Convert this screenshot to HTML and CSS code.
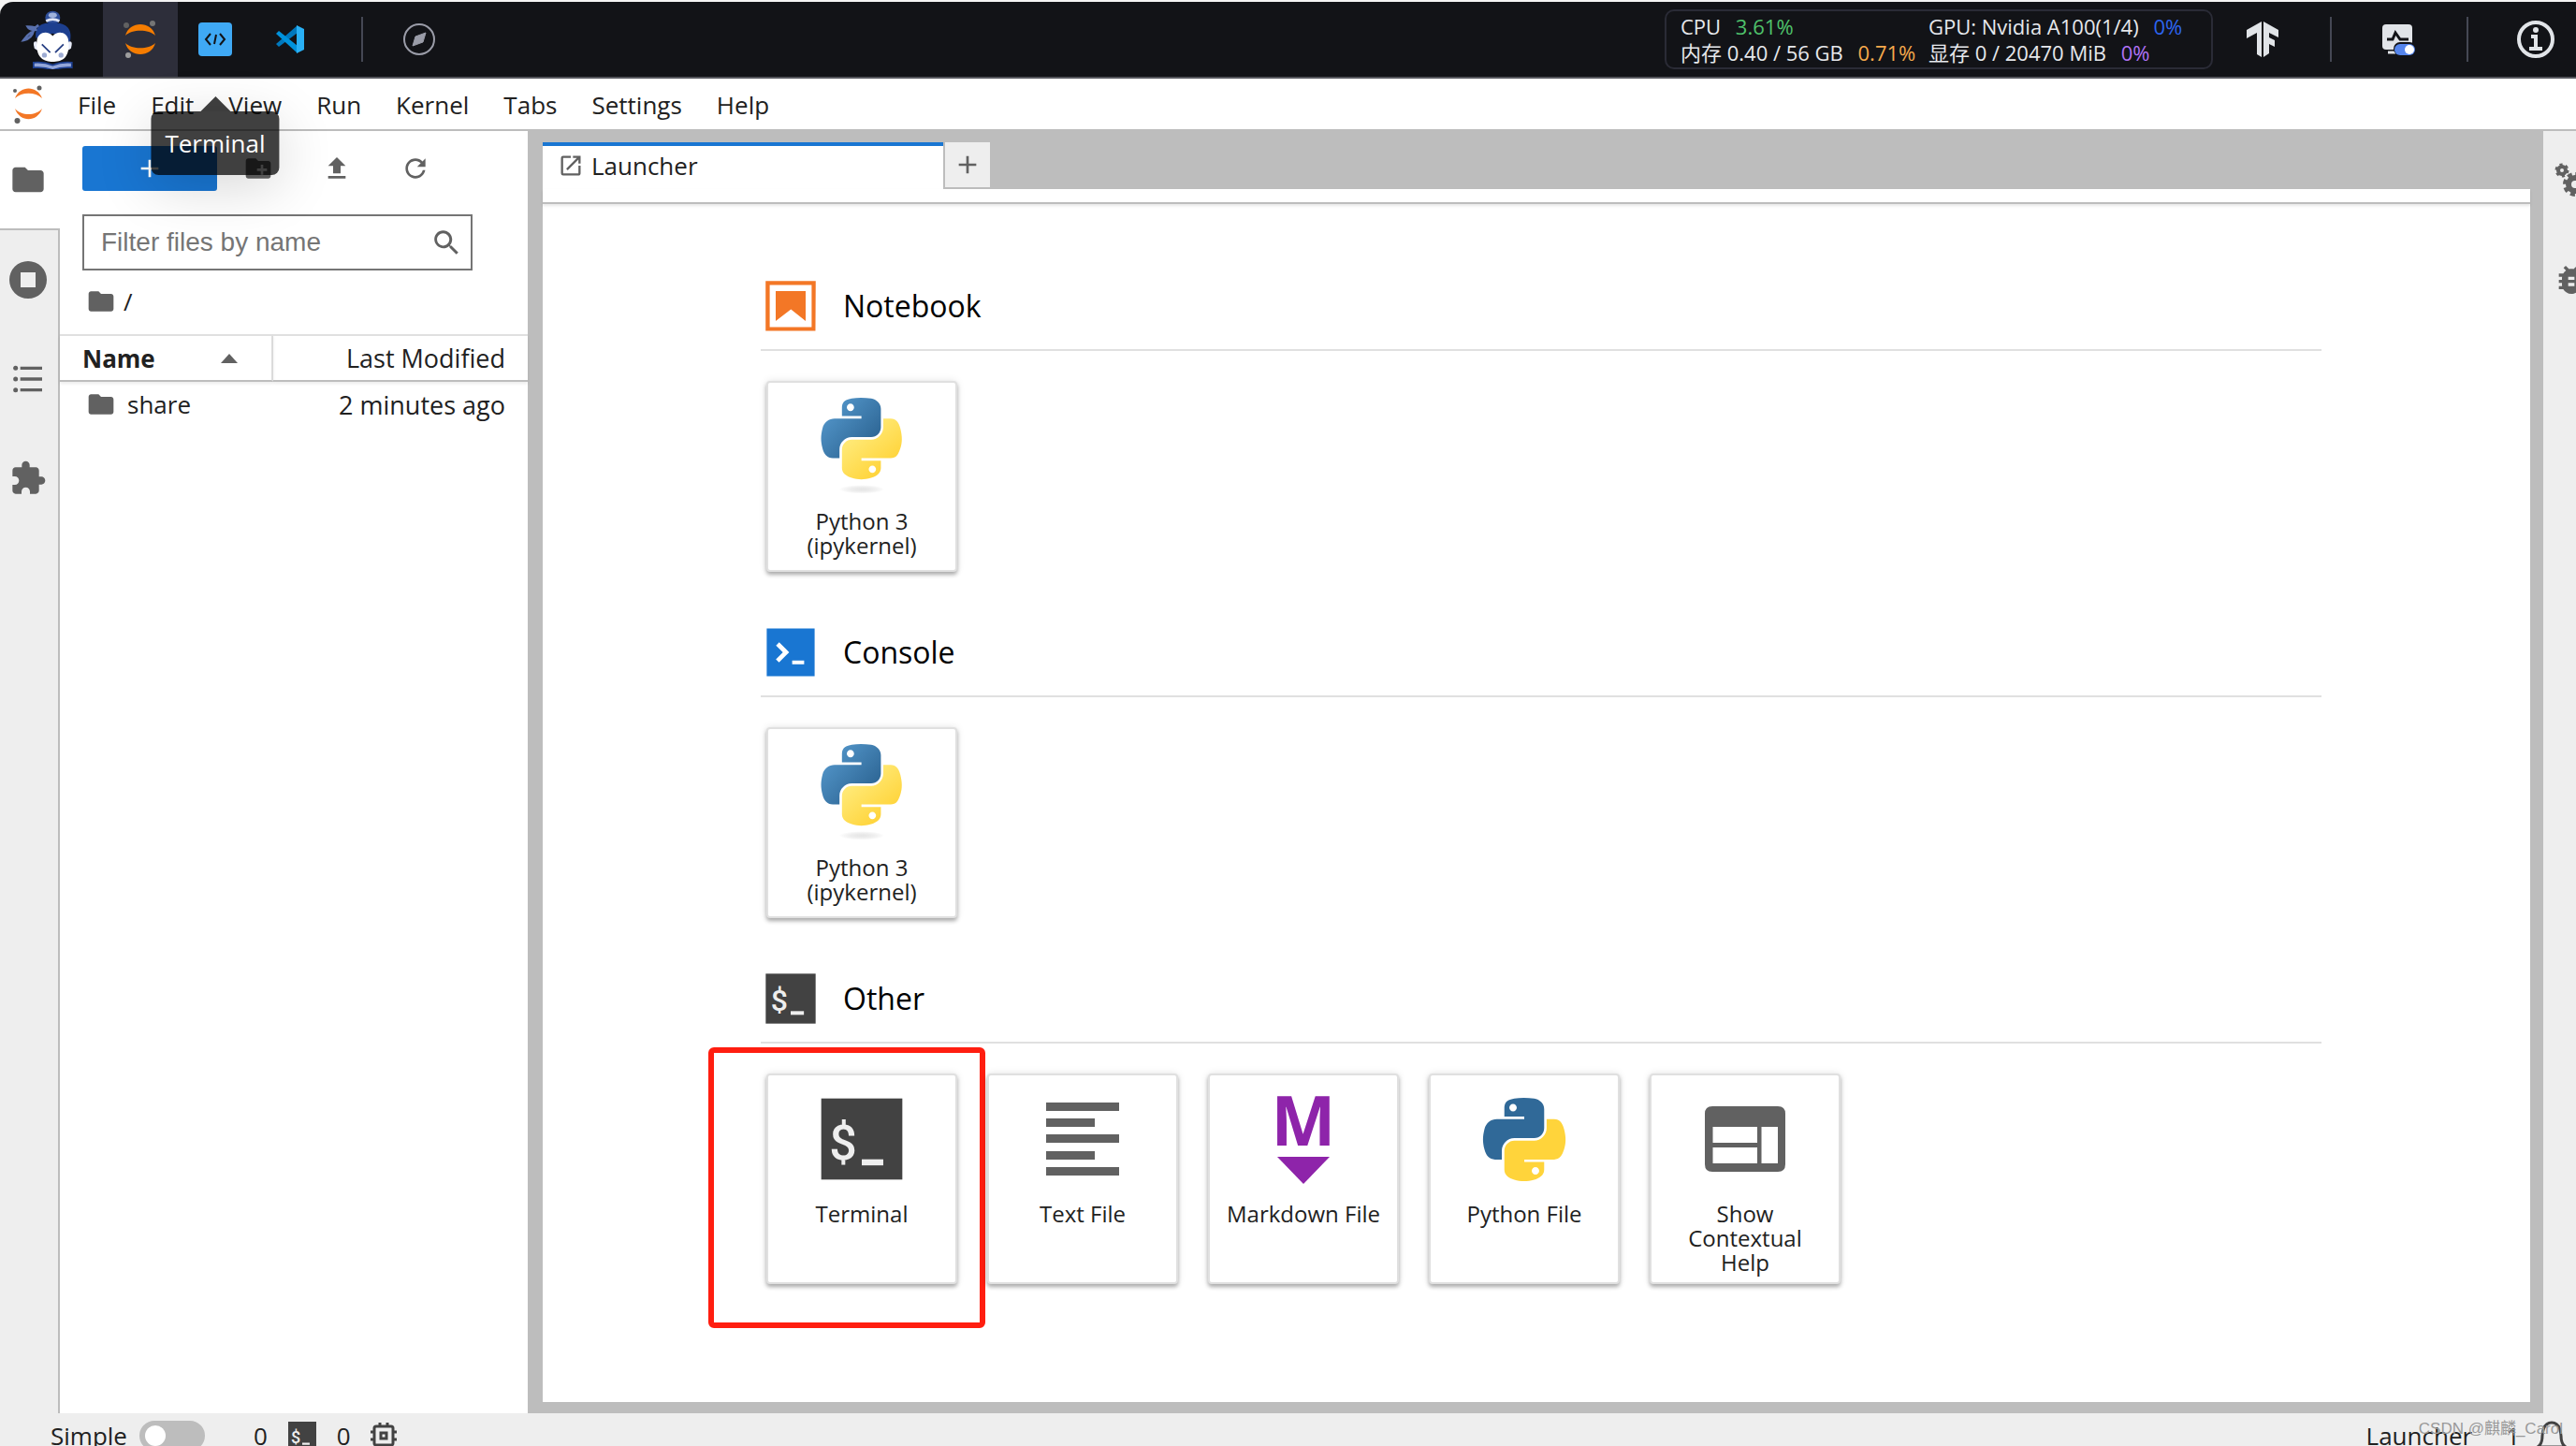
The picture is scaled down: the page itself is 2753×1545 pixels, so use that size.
FILE: index.html
```html
<!DOCTYPE html>
<html lang="en">
<head>
    <meta charset="UTF-8">
    <meta name="viewport" content="width=device-width, initial-scale=1.0">
    <title>JupyterLab</title>
    <link rel="stylesheet" href="styles.css">
</head>
<body>
    <!-- Shared icons -->
    <svg class="sprite" aria-hidden="true">
        <defs>
            <linearGradient id="pyBlue" x1="0" y1="0" x2="0.8" y2="0.75">
                <stop offset="0" stop-color="#5a9fd4"/>
                <stop offset="1" stop-color="#306998"/>
            </linearGradient>
            <linearGradient id="pyYellow" x1="0.25" y1="0.3" x2="0.7" y2="0.85">
                <stop offset="0" stop-color="#ffe873"/>
                <stop offset="1" stop-color="#ffd43b"/>
            </linearGradient>
            <radialGradient id="pyShadow">
                <stop offset="0" stop-color="#b8b8b8" stop-opacity="0.35"/>
                <stop offset="1" stop-color="#7f7f7f" stop-opacity="0"/>
            </radialGradient>
            <path id="pyTop" d="M54.9 0C50.3 0 46 .4 42.1 1.1 30.8 3.1 28.7 7.3 28.7 15v10.2h26.8v3.4H18.6c-7.8 0-14.6 4.7-16.7 13.6-2.5 10.2-2.6 16.6 0 27.3 1.9 7.9 6.4 13.6 14.2 13.6h9.2V70.9c0-8.9 7.7-16.7 16.8-16.7h26.8c7.4 0 13.4-6.1 13.4-13.6V15.100c0-7.300-6.100-12.700-13.400-14C64.300.300 59.500 0 54.900 0zM40.400 8.200c2.800 0 5 2.300 5 5.100s-2.200 5.100-5 5.100-5-2.300-5-5.100 2.200-5.100 5-5.100z"/>
            <path id="pyBottom" d="M85.600 28.700v11.900c0 9.200-7.800 17-16.700 17H42.100c-7.300 0-13.400 6.300-13.400 13.600v25.500c0 7.300 6.300 11.500 13.400 13.600 8.500 2.500 16.600 2.900 26.800 0 6.700-2 13.400-5.900 13.400-13.600V86.500H55.500v-3.400h40.200c7.800 0 10.700-5.400 13.400-13.600 2.800-8.400 2.700-16.500 0-27.200-1.900-7.800-5.600-13.600-13.400-13.600zM70.600 93.300c2.800 0 5 2.300 5 5.100s-2.200 5.100-5 5.100-5-2.300-5-5.100 2.200-5.100 5-5.100z"/>
        </defs>
        <symbol id="folder" viewBox="0 0 24 24">
            <path d="M10 4H4c-1.100 0-1.990.9-1.990 2L2 18c0 1.100.9 2 2 2h16c1.100 0 2-.9 2-2V8c0-1.100-.9-2-2-2h-8l-2-2z"/>
        </symbol>
        <symbol id="python" viewBox="-11 0 134 134">
            <use href="#pyTop" fill="url(#pyBlue)"/>
            <use href="#pyBottom" fill="url(#pyYellow)"/>
            <ellipse cx="56" cy="126" rx="31" ry="6" fill="url(#pyShadow)"/>
        </symbol>
        <symbol id="terminal" viewBox="0 0 24 24">
            <rect x="2" y="2" width="20" height="20" fill="#424242"/>
            <text class="glyph" x="4" y="17" font-size="12" fill="#eee">$</text>
            <rect x="12" y="17" width="5.300" height="1.500" fill="#eee"/>
        </symbol>
    </svg>

    <header class="topbar">
        <svg class="brand" viewBox="0 0 66 72" aria-label="Logo">
            <ellipse cx="39" cy="10" rx="9" ry="8" fill="#30509b"/>
            <ellipse cx="39" cy="7" rx="5" ry="3" fill="#9fb2dc"/>
            <path d="M31 14q8-4 16 0" fill="none" stroke="#dfe5f5" stroke-width="3"/>
            <path d="M19 35C16 17 30 16 39 16s25 2 21 22q-4 5-8-5-13-8-27 0z" fill="#1d3f8f"/>
            <path d="M20 24q-8 2-11-3 5 0 9 1l4-3M16 25q-2 10-12 12 4-6 10-10" fill="none" stroke="#5970ad" stroke-width="3"/>
            <path d="M20 39q-6-2-3 8l5 3zM58 39q6-2 3 8l-5 3z" fill="#e8ecfa"/>
            <path d="M20 38c1-11 13-13 19-6 6-7 18-5 19 6 2 22-9 25-19 25s-21-4-19-25z" fill="#fff"/>
            <path d="M26 42l10 10M52 42L42 52" stroke="#273f83" stroke-width="2"/>
            <circle cx="29" cy="55" r="3" fill="#9dabd2"/>
            <circle cx="49" cy="55" r="3" fill="#9dabd2"/>
            <path d="M16 64q13-1 23 3 10-4 23-3v6q-13-1-23 3-10-4-23-3z" fill="#93a6d9" stroke="#1d3f8f" stroke-width="2"/>
        </svg>
        <button class="app active" aria-label="Jupyter">
            <svg width="40" height="40" viewBox="0 0 40 40">
                <path d="M4 16C8 0 32 0 36 16 29 9 11 9 4 16zM4 24c4 16 28 16 32 0-7 7-25 7-32 0z" fill="#f57c00"/>
                <circle cx="5" cy="5" r="3" fill="#616161"/><circle cx="33" cy="3" r="3" fill="#757575"/><circle cx="7" cy="37" r="3" fill="#9e9e9e"/>
            </svg>
        </button>
        <button class="app" aria-label="Terminal">
            <svg width="36" height="36" viewBox="0 0 36 36">
                <rect width="36" height="36" rx="4" fill="#3fa9f5"/>
                <path d="M13 12l-5 6 5 6M23 12l5 6-5 6M19 13l-2 10" fill="none" stroke="#121317" stroke-width="2"/>
            </svg>
            <span class="tooltip">Terminal</span>
        </button>
        <button class="app" aria-label="VS Code">
            <svg width="32" height="32" viewBox="0 0 32 32">
                <path d="M1 21l3 3L24 9V1z" fill="#0078bd"/>
                <path d="M1 10l3-3 20 16v8z" fill="#0092dc"/>
                <path d="M23 1l8 4v22l-8 4z" fill="#29b0f5"/>
            </svg>
        </button>
        <span class="divider apps-end"></span>
        <button class="app" aria-label="Explore">
            <svg width="36" height="36" viewBox="0 0 36 36">
                <circle cx="18" cy="18" r="16" fill="none" stroke="#9a9ca8" stroke-width="2"/>
                <path d="M25 11l-3 10-11 4 3-10z" fill="#9a9ca8" stroke="#9a9ca8" stroke-linejoin="round"/>
            </svg>
        </button>

        <div class="stats">
            <p>CPU <span class="green">3.61%</span></p>
            <p>GPU: Nvidia A100(1/4) <span class="blue">0%</span></p>
            <p>内存 0.40 / 56 GB <span class="orange">0.71%</span></p>
            <p>显存 0 / 20470 MiB <span class="purple">0%</span></p>
        </div>
        <button class="app" aria-label="TensorBoard">
            <svg width="34" height="38" viewBox="0 0 34 38">
                <path fill="#e1e4e8" d="M16 0v38l-5-3V12L0 18V9zM18 0l16 9v8l-10-5v5l6 3v7l-6-3v10l-6 4z"/>
            </svg>
        </button>
        <span class="divider"></span>
        <button class="app" aria-label="Monitor">
            <svg width="36" height="34" viewBox="0 0 36 34">
                <rect width="32" height="27" y="1" rx="4" fill="#e1e4e8"/>
                <path d="M5 17h6l3-7 5 7h9" fill="none" stroke="#121317" stroke-width="3"/>
                <path d="M6 31h8" stroke="#e1e4e8" stroke-width="3"/>
                <rect x="12" y="20" width="24" height="14" rx="7" fill="#121317"/>
                <rect x="13" y="22" width="22" height="12" rx="6" fill="#5585ec"/>
                <circle cx="29" cy="28" r="5" fill="#fff"/>
            </svg>
        </button>
        <span class="divider"></span>
        <button class="app" aria-label="Info">
            <svg width="40" height="40" viewBox="0 0 40 40" fill="none" stroke="#e1e4e8">
                <circle cx="20" cy="20" r="18" stroke-width="4"/>
                <path d="M15 17h5v13M13 30h14" stroke-width="4"/>
                <circle cx="20" cy="10" r="3" fill="#e1e4e8" stroke="none"/>
            </svg>
        </button>
    </header>

    <nav class="menubar">
        <svg width="40" height="44" viewBox="0 0 40 44">
            <path d="M6 16C11 2 30 2 35 16 28 9 13 9 6 16zM6 27c5 15 24 15 29 0-7 8-22 8-29 0z" fill="#f37726"/>
            <circle cx="6" cy="8" r="2" fill="#616161"/><circle cx="32" cy="5" r="2.500" fill="#616161"/><circle cx="8.500" cy="40" r="3" fill="#616161"/>
        </svg>
        <div class="menu">
            <button>File</button>
            <button>Edit</button>
            <button>View</button>
            <button>Run</button>
            <button>Kernel</button>
            <button>Tabs</button>
            <button>Settings</button>
            <button>Help</button>
        </div>
    </nav>

    <div class="workspace">
        <aside class="sidebar">
            <button class="current" aria-label="File Browser"><svg class="icon-lg"><use href="#folder"/></svg></button>
            <button aria-label="Running"><svg class="icon-lg" viewBox="2 2 20 20"><path d="M12 2a10 10 0 100 20 10 10 0 000-20zm4 14H8V8h8z"/></svg></button>
            <button aria-label="Table of Contents"><svg class="icon-lg" viewBox="0 0 24 24"><path d="M7 4h14v2H7zM7 11h14v2H7zM7 18h14v2H7z"/><circle cx="4" cy="5" r="1.500"/><circle cx="4" cy="12" r="1.500"/><circle cx="4" cy="19" r="1.500"/></svg></button>
            <button aria-label="Extensions"><svg class="icon-lg" viewBox="0 0 24 24"><path d="M20.500 11H19V7c0-1.100-.9-2-2-2h-4V3.500C13 2.120 11.880 1 10.500 1S8 2.120 8 3.500V5H4c-1.100 0-1.990.9-1.990 2v3.800H3.500c1.490 0 2.700 1.210 2.700 2.700s-1.210 2.700-2.700 2.700H2V20c0 1.100.9 2 2 2h3.800v-1.500c0-1.490 1.210-2.700 2.700-2.700 1.490 0 2.700 1.210 2.700 2.700V22H17c1.100 0 2-.9 2-2v-4h1.500c1.380 0 2.500-1.120 2.500-2.500S21.880 11 20.500 11z"/></svg></button>
        </aside>

        <section class="files">
            <div class="file-toolbar">
                <button class="new" aria-label="New Launcher"><svg class="icon" viewBox="0 0 24 24"><path d="M19 13h-6v6h-2v-6H5v-2h6V5h2v6h6z"/></svg></button>
                <button aria-label="New Folder"><svg class="icon" viewBox="0 0 24 24"><path d="M20 6h-8l-2-2H4c-1.110 0-1.990.89-1.990 2L2 18c0 1.110.89 2 2 2h16c1.110 0 2-.89 2-2V8c0-1.110-.89-2-2-2zm-1 8h-3v3h-2v-3h-3v-2h3V9h2v3h3v2z"/></svg></button>
                <button aria-label="Upload"><svg class="icon" viewBox="0 0 24 24"><path d="M5 20h14v-2H5v2zm0-10h4v6h6v-6h4l-7-7-7 7z"/></svg></button>
                <button aria-label="Refresh"><svg class="icon" viewBox="0 0 18 18"><path d="M9 13.500c-2.490 0-4.500-2.010-4.500-4.500S6.510 4.500 9 4.500c1.240 0 2.360.52 3.170 1.330L10 8h5V3l-1.760 1.760C12.150 3.680 10.660 3 9 3 5.690 3 3.010 5.690 3.010 9S5.690 15 9 15c2.970 0 5.430-2.160 5.900-5h-1.520c-.46 2-2.240 3.500-4.380 3.500z"/></svg></button>
            </div>
            <div class="filter">
                <input type="text" placeholder="Filter files by name" aria-label="Filter files by name">
                <svg class="icon" viewBox="0 0 18 18"><path d="M12.100 10.900h-.7l-.2-.2c.8-.9 1.300-2.200 1.300-3.500 0-3-2.400-5.400-5.400-5.400S1.800 4.200 1.800 7.100s2.400 5.400 5.400 5.400c1.300 0 2.500-.5 3.500-1.300l.2.2v.7l4.100 4.100 1.200-1.200zm-5 0c-2.100 0-3.700-1.700-3.700-3.700s1.700-3.700 3.700-3.700 3.700 1.700 3.700 3.700-1.600 3.700-3.700 3.700z"/></svg>
            </div>
            <div class="crumbs"><svg class="icon"><use href="#folder"/></svg><span>/</span></div>
            <table class="listing">
                <thead>
                    <tr>
                        <th class="name"><div>Name <svg width="18" height="10" viewBox="0 0 18 10"><path d="M0 10l9-10 9 10z"/></svg></div></th>
                        <th class="modified">Last Modified</th>
                    </tr>
                </thead>
                <tbody>
                    <tr>
                        <td><a href="#share"><svg class="icon"><use href="#folder"/></svg>share</a></td>
                        <td class="modified">2 minutes ago</td>
                    </tr>
                </tbody>
            </table>
        </section>

        <main class="dock">
            <div class="tabs">
                <button class="tab"><svg width="28" height="28" viewBox="0 0 24 24"><path d="M19 19H5V5h7V3H5a2 2 0 00-2 2v14a2 2 0 002 2h14c1.100 0 2-.9 2-2v-7h-2v7zM14 3v2h3.590l-9.830 9.830 1.410 1.410L19 6.410V10h2V3h-7z"/></svg>Launcher</button>
                <button class="add" aria-label="New tab"><svg class="icon" viewBox="0 0 24 24"><path d="M19 13h-6v6h-2v-6H5v-2h6V5h2v6h6z"/></svg></button>
            </div>
            <div class="tab-toolbar"></div>
            <div class="launcher">
                <section>
                    <h2>
                        <svg width="64" height="64" viewBox="0 0 22 22"><path fill="#f37726" d="M18.700 3.300v15.400H3.300V3.300h15.400m1.500-1.500H1.800v18.300h18.300l.1-18.300z"/><path fill="#f37726" d="M16.500 16.500l-5.400-4.300-5.600 4.300v-11h11z"/></svg>
                        Notebook
                    </h2>
                    <div class="cards">
                        <button class="card"><svg class="art"><use href="#python"/></svg><span>Python 3 (ipykernel)</span></button>
                    </div>
                </section>
                <section>
                    <h2>
                        <svg width="64" height="64" viewBox="0 0 200 200"><path fill="#1976d2" d="M20 20h160v160H20z"/><path fill="#fff" d="M105 127.300h40v12.800h-40zM51.100 77L74 99.900l-23.300 23.300 10.500 10.500 23.300-23.300L95 99.900 84.500 89.400 61.600 66.500z"/></svg>
                        Console
                    </h2>
                    <div class="cards">
                        <button class="card"><svg class="art"><use href="#python"/></svg><span>Python 3 (ipykernel)</span></button>
                    </div>
                </section>
                <section>
                    <h2>
                        <svg width="64" height="64"><use href="#terminal"/></svg>
                        Other
                    </h2>
                    <div class="cards tall">
                        <button class="card marked"><svg class="art"><use href="#terminal"/></svg><span>Terminal</span></button>
                        <button class="card"><svg class="art" viewBox="0 0 104 104"><path d="M13 13h78v9H13zM13 30h52v9H13zM13 47h78v9H13zM13 65h52v9H13zM13 82h78v9H13z"/></svg><span>Text File</span></button>
                        <button class="card"><svg class="art" viewBox="0 0 104 104"><text class="letter" x="52" y="59" font-size="73" text-anchor="middle" fill="#8e24aa">M</text><path fill="#8e24aa" d="M24 71h56L52 100z"/></svg><span>Markdown File</span></button>
                        <button class="card"><svg class="art" viewBox="-10 -10 131 131"><use href="#pyTop" fill="#306998"/><use href="#pyBottom" fill="#ffd43b"/></svg><span>Python File</span></button>
                        <button class="card"><svg class="art" viewBox="0 0 104 104"><path fill-rule="evenodd" d="M17 17h70q8 0 8 8v54q0 8-8 8H17q-8 0-8-8V25q0-8 8-8zM17.500 39v17H65V39zM17.500 61v17H65V61zM69.500 39v39H87V39z"/></svg><span>Show Contextual Help</span></button>
                    </div>
                </section>
            </div>
        </main>

        <aside class="sidebar right">
            <button aria-label="Property Inspector">
                <svg class="icon-lg" viewBox="0 0 40 40" fill="none" stroke="#616161">
                    <circle cx="10" cy="9" r="4" stroke-width="4"/><circle cx="10" cy="9" r="6" stroke-width="3" stroke-dasharray="3 3.280"/>
                    <circle cx="24" cy="24" r="7" stroke-width="6"/><circle cx="24" cy="24" r="11" stroke-width="4" stroke-dasharray="5 3.640"/>
                </svg>
            </button>
            <button aria-label="Debugger"><svg class="icon-lg" viewBox="0 0 24 24"><path d="M20 8h-2.810c-.45-.78-1.070-1.450-1.820-1.960L17 4.410 15.590 3l-2.170 2.170C12.960 5.060 12.490 5 12 5s-.96.060-1.410.170L8.410 3 7 4.410l1.620 1.630C7.880 6.550 7.260 7.220 6.810 8H4v2h2.090c-.05.330-.09.660-.09 1v1H4v2h2v1c0 .340.040.670.090 1H4v2h2.810c1.040 1.790 2.970 3 5.190 3s4.150-1.210 5.190-3H20v-2h-2.090c.050-.330.090-.660.090-1v-1h2v-2h-2v-1c0-.340-.040-.670-.090-1H20V8zm-6 8h-4v-2h4v2zm0-4h-4v-2h4v2z"/></svg></button>
        </aside>
    </div>

    <footer class="statusbar">
        <div class="status-items">
            <label for="simple">Simple</label>
            <input type="checkbox" id="simple" class="switch">
            <div class="kernels">
                <span>0</span>
                <svg width="36" height="36"><use href="#terminal"/></svg>
                <span>0</span>
                <svg class="icon" viewBox="0 0 32 32" fill="none" stroke="#424242" stroke-width="3"><rect x="6" y="6" width="20" height="20" rx="2"/><rect x="13" y="13" width="6" height="6"/><path d="M12 2v4M20 2v4M12 26v4M20 26v4M2 12h4M2 20h4M26 12h4M26 20h4"/></svg>
            </div>
            <span class="mode">Launcher</span>
            <span class="count">1</span>
            <svg width="32" height="36" viewBox="0 0 32 36" fill="none" stroke="#424242" stroke-width="3"><path d="M1 30q5-3 5-12Q7 4 16 4t10 14q0 9 5 12z"/></svg>
        </div>
        <span class="watermark">CSDN @麒麟_Carol</span>
    </footer>
</body>
</html>
```
FILE: styles.css
```css
* {
    box-sizing: border-box;
}
body {
    margin: 0;
    height: 100vh;
    padding-top: 2px;
    display: flex;
    flex-direction: column;
    overflow: hidden;
    background: #f4f4f4;
    color: #212121;
    font-family: "Open Sans", "Noto Sans CJK SC", sans-serif;
    font-size: 26px;
}
button {
    display: flex;
    align-items: center;
    justify-content: center;
    padding: 0;
    border: none;
    background: none;
    color: inherit;
    font: inherit;
    cursor: pointer;
}
svg {
    display: block;
    flex: none;
    fill: #616161;
}
svg[fill="none"] {
    fill: none;
}
.sprite {
    position: absolute;
    width: 0;
    height: 0;
}
.icon {
    width: 32px;
    height: 32px;
}
.icon-lg {
    width: 40px;
    height: 40px;
}
.glyph {
    font-family: Roboto, sans-serif;
    font-weight: 500;
}
.letter {
    font-family: "Open Sans", sans-serif;
    font-weight: 700;
}

/* Top bar */
.topbar {
    display: flex;
    align-items: center;
    height: 82px;
    flex: none;
    padding-right: 3px;
    background: #121317;
    border-bottom: 2px solid #55565c;
    border-top-left-radius: 14px;
}
.brand {
    width: 62px;
    height: 64px;
    margin: 0 28px 0 20px;
}
.app {
    position: relative;
    width: 80px;
    height: 80px;
    flex: none;
}
.app.active {
    background: #2d2e3a;
}
.divider {
    width: 2px;
    height: 48px;
    margin: 0 32px;
    background: #454854;
}
.apps-end {
    margin: 0 20px 0 36px;
}
.stats {
    display: grid;
    grid-template-columns: 265px 287px;
    align-content: center;
    height: 64px;
    margin-left: auto;
    margin-right: 13px;
    padding: 0 15px;
    border: 2px solid #2a2b36;
    border-radius: 10px;
    color: #e6e8ec;
    font-size: 22px;
    line-height: 28px;
}
.stats p {
    margin: 0;
    white-space: nowrap;
}
.stats span {
    margin-left: 10px;
}
.green { color: #4fc26b; }
.blue { color: #2d65f0; }
.orange { color: #f5a94c; }
.purple { color: #b072f5; }

.tooltip {
    position: absolute;
    z-index: 5;
    top: 117px;
    left: 50%;
    transform: translateX(-50%);
    padding: 0 15px;
    line-height: 68px;
    border-radius: 8px;
    background: rgba(0, 0, 0, 0.75);
    box-shadow: 0 12px 60px rgba(0, 0, 0, 0.16);
    color: #fff;
}
.tooltip::before {
    content: "";
    position: absolute;
    left: 50%;
    bottom: 100%;
    margin-left: -16px;
    border: 16px solid transparent;
    border-top: none;
    border-bottom-color: rgba(0, 0, 0, 0.75);
}

/* Menu */
.menubar {
    display: flex;
    align-items: center;
    flex: none;
    gap: 15px;
    height: 56px;
    padding-left: 10px;
    background: #fff;
    border-bottom: 2px solid #bdbdbd;
}
.menu {
    display: flex;
    gap: 1px;
}
.menu button {
    padding: 2px 18px 0;
    height: 54px;
}

/* Workspace */
.workspace {
    display: flex;
    flex: 1;
    min-height: 0;
    background: #bdbdbd;
}
.sidebar {
    width: 64px;
    flex: none;
    background: #eee;
    border-right: 2px solid #bdbdbd;
}
.sidebar button {
    width: 60px;
    height: 106px;
}
.sidebar .current {
    width: 64px;
    padding-right: 4px;
    background: #fff;
    border-bottom: 2px solid #bdbdbd;
}
.sidebar.right {
    width: 35px;
    border: none;
    overflow: hidden;
}
.files {
    width: 500px;
    flex: none;
    background: #fff;
}
.file-toolbar {
    display: flex;
    padding: 16px 24px 0;
}
.file-toolbar button {
    width: 84px;
    height: 48px;
}
.file-toolbar .new {
    width: 144px;
    margin-right: 2px;
    border-radius: 3px;
    background: #1976d2;
}
.new svg {
    fill: #fff;
}
.filter {
    display: flex;
    align-items: center;
    width: 417px;
    height: 60px;
    margin: 25px 24px 0;
    padding-right: 10px;
    border: 2px solid #757575;
}
.filter input {
    flex: 1;
    min-width: 0;
    padding: 0 18px;
    border: none;
    outline: none;
    background: none;
    font: 28px "Liberation Sans", Arial, sans-serif;
}
.filter input::placeholder {
    color: #757575;
}
.crumbs {
    display: flex;
    align-items: center;
    gap: 8px;
    height: 68px;
    padding: 0 28px 3px;
}
.listing {
    width: 100%;
    border-collapse: separate;
    border-spacing: 0;
}
.listing th {
    height: 51px;
    border-top: 2px solid #e0e0e0;
    border-bottom: 2px solid #bdbdbd;
    box-shadow: 0 2px 3px rgba(0, 0, 0, 0.08);
    text-align: left;
}
.listing .name {
    width: 228px;
    padding: 0 36px 0 24px;
    border-right: 2px solid #e0e0e0;
}
.name div {
    display: flex;
    align-items: center;
    justify-content: space-between;
}
.listing .modified {
    padding: 0 24px 0 0;
    text-align: right;
    font-size: 27px;
    font-weight: 400;
}
.listing td {
    height: 48px;
    padding: 0 0 0 28px;
}
.listing a {
    display: flex;
    align-items: center;
    gap: 12px;
    color: inherit;
    text-decoration: none;
}

/* Dock */
.dock {
    display: flex;
    flex-direction: column;
    flex: 1;
    min-width: 0;
    margin: 12px 14px 12px 16px;
}
.tabs {
    display: flex;
    height: 50px;
    flex: none;
}
.tab {
    width: 428px;
    justify-content: flex-start;
    gap: 8px;
    padding: 0 16px 4px;
    border-top: 4px solid #1976d2;
    background: #fff;
}
.add {
    width: 48px;
    height: 48px;
    margin-left: 2px;
    background: #eee;
}
.tab-toolbar {
    height: 16px;
    flex: none;
    background: #fff;
    border-bottom: 2px solid #bdbdbd;
    box-shadow: 0 2px 3px rgba(0, 0, 0, 0.1);
    z-index: 1;
}
.launcher {
    flex: 1;
    min-height: 0;
    padding: 62px 223px 0 233px;
    background: #fff;
}
.launcher section {
    padding-bottom: 38px;
}
.launcher h2 {
    display: flex;
    align-items: center;
    gap: 24px;
    height: 95px;
    margin: 0 0 32px;
    border-bottom: 2px solid #e0e0e0;
    color: #000;
    font-size: 32px;
    font-weight: 400;
}
.cards {
    display: flex;
    gap: 32px;
    padding: 0 0 1px 6px;
}
.card {
    position: relative;
    width: 204px;
    height: 204px;
    flex-direction: column;
    justify-content: flex-start;
    padding: 16px 12px 0;
    border: 2px solid #e0e0e0;
    border-radius: 4px;
    background: #fff;
    box-shadow: 0 3px 4px rgba(0, 0, 0, 0.3), 0 0 8px rgba(0, 0, 0, 0.1);
    font-size: 24px;
    line-height: 26px;
}
.tall .card {
    height: 225px;
}
.art {
    width: 104px;
    height: 104px;
    margin-bottom: 15px;
}
.marked::after {
    content: "";
    position: absolute;
    inset: -30px -32px -49px -64px;
    border: 6px solid #ff1e10;
    border-radius: 6px;
}

/* Status bar */
.statusbar {
    position: relative;
    height: 35px;
    flex: none;
    overflow: hidden;
    background: #eee;
}
.status-items {
    display: flex;
    align-items: center;
    height: 48px;
    padding: 0 10px 0 54px;
}
.switch {
    appearance: none;
    width: 70px;
    height: 32px;
    margin: 0 0 0 13px;
    padding: 5px 6px;
    border-radius: 16px;
    background: #bdbdbd;
}
.switch::before {
    content: "";
    display: block;
    width: 22px;
    height: 22px;
    border-radius: 50%;
    background: #fff;
}
.kernels {
    display: flex;
    align-items: center;
    gap: 19px;
    margin-left: 52px;
}
.mode {
    margin-left: auto;
}
.count {
    margin: 0 18px 0 36px;
}
.watermark {
    position: absolute;
    right: 14px;
    top: 4px;
    color: #999;
    font: 17px/26px "Liberation Sans", "Noto Sans CJK SC", sans-serif;
}
```
